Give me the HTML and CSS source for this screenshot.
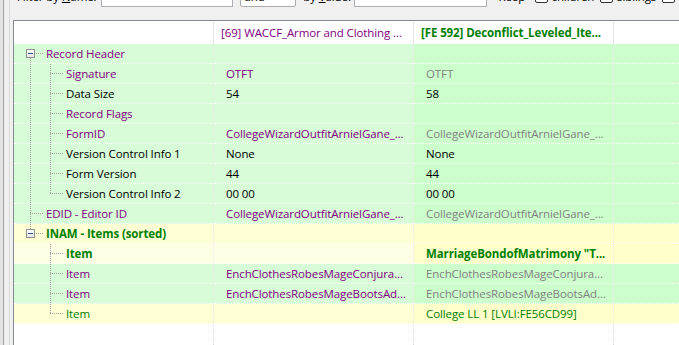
FILE: index.html
```html
<!DOCTYPE html>
<html lang="en">
<head>
  <meta charset="UTF-8">
  <title>Record View</title>
  <link rel="stylesheet" href="styles.css">
</head>
<body>
  <div class="app">
    <div class="side"><div class="split"></div></div>

    <div class="main">
      <div class="toolbar">
        <span class="lbl lbl-name">Filter by <u>N</u>ame:</span>
        <span class="field f-name"></span>
        <span class="field combo">and</span>
        <span class="lbl lbl-value">by <u>V</u>alue:</span>
        <span class="field f-value"></span>
        <span class="lbl lbl-keep">Keep</span>
        <span class="check"></span>
        <span class="lbl">children</span>
        <span class="check"></span>
        <span class="lbl">siblings</span>
        <span class="check"></span>
      </div>

      <div class="grid">
        <div class="hdr">
          <div></div>
          <div class="purple">[69] WACCF_Armor and Clothing ...</div>
          <div class="green bold">[FE 592] Deconflict_Leveled_Ite...</div>
          <div></div>
        </div>

        <!-- Record Header -->
        <div class="row g">
          <div class="name purple"><span class="ln v0 from-box"></span><span class="ln box"></span><span class="ln h0"></span>Record Header</div>
          <div></div><div></div><div></div>
        </div>
        <div class="row g">
          <div class="name l1 purple"><span class="ln v0"></span><span class="ln v1"></span><span class="ln h1"></span>Signature</div>
          <div class="purple">OTFT</div><div class="grey">OTFT</div><div></div>
        </div>
        <div class="row g">
          <div class="name l1"><span class="ln v0"></span><span class="ln v1"></span><span class="ln h1"></span>Data Size</div>
          <div>54</div><div>58</div><div></div>
        </div>
        <div class="row g">
          <div class="name l1 purple"><span class="ln v0"></span><span class="ln v1"></span><span class="ln h1"></span>Record Flags</div>
          <div></div><div></div><div></div>
        </div>
        <div class="row g">
          <div class="name l1 purple"><span class="ln v0"></span><span class="ln v1"></span><span class="ln h1"></span>FormID</div>
          <div class="purple">CollegeWizardOutfitArnielGane_...</div><div class="grey">CollegeWizardOutfitArnielGane_...</div><div></div>
        </div>
        <div class="row g">
          <div class="name l1"><span class="ln v0"></span><span class="ln v1"></span><span class="ln h1"></span>Version Control Info 1</div>
          <div>None</div><div>None</div><div></div>
        </div>
        <div class="row g">
          <div class="name l1"><span class="ln v0"></span><span class="ln v1"></span><span class="ln h1"></span>Form Version</div>
          <div>44</div><div>44</div><div></div>
        </div>
        <div class="row g">
          <div class="name l1"><span class="ln v0"></span><span class="ln v1 end"></span><span class="ln h1"></span>Version Control Info 2</div>
          <div>00 00</div><div>00 00</div><div></div>
        </div>

        <!-- EDID -->
        <div class="row g">
          <div class="name purple"><span class="ln v0"></span><span class="ln h0 nobox"></span>EDID - Editor ID</div>
          <div class="purple">CollegeWizardOutfitArnielGane_...</div><div class="grey">CollegeWizardOutfitArnielGane_...</div><div></div>
        </div>

        <!-- INAM -->
        <div class="row y">
          <div class="name green bold"><span class="ln v0 to-box"></span><span class="ln box"></span><span class="ln h0"></span>INAM - Items (sorted)</div>
          <div></div><div></div><div></div>
        </div>
        <div class="row y pale">
          <div class="name l1 green bold"><span class="ln v1"></span><span class="ln h1"></span>Item</div>
          <div></div><div class="green bold">MarriageBondofMatrimony "T...</div><div></div>
        </div>
        <div class="row g">
          <div class="name l1 purple"><span class="ln v1"></span><span class="ln h1"></span>Item</div>
          <div class="purple">EnchClothesRobesMageConjura...</div><div class="grey">EnchClothesRobesMageConjura...</div><div></div>
        </div>
        <div class="row g">
          <div class="name l1 purple"><span class="ln v1"></span><span class="ln h1"></span>Item</div>
          <div class="purple">EnchClothesRobesMageBootsAd...</div><div class="grey">EnchClothesRobesMageBootsAd...</div><div></div>
        </div>
        <div class="row y">
          <div class="name l1 green"><span class="ln v1 end"></span><span class="ln h1"></span>Item</div>
          <div></div><div class="green">College LL 1 [LVLI:FE56CD99]</div><div></div>
        </div>

        <div class="row fill">
          <div></div><div></div><div></div><div></div>
        </div>
      </div>
    </div>
  </div>
</body>
</html>
```

FILE: styles.css
```css
html, body {
  margin: 0;
  height: 345px;
  overflow: hidden;
}
body {
  font-family: "Open Sans", "Noto Sans", sans-serif;
  font-size: 11.5px;
  letter-spacing: -0.1px;
  background: #f0f0f0;
  color: #000;
}
.app {
  display: flex;
  height: 345px;
}

/* left splitter strip */
.side {
  width: 13px;
  flex: none;
  box-sizing: border-box;
  padding-left: 3px;
  background: linear-gradient(to right, #e4e4e4 0 3px, #f0f0f0 3px);
}
.split {
  width: 5px;
  height: 100%;
  border-left: 1px solid #a0a0a0;
  border-right: 1px solid #d9d9d9;
}

.main {
  flex: 1;
  display: flex;
  flex-direction: column;
  min-width: 0;
}

/* filter bar, mostly scrolled off the top */
.toolbar {
  height: 20px;
  flex: none;
  display: flex;
  align-items: flex-start;
  padding-left: 4px;
  white-space: nowrap;
}
.lbl {
  margin-top: -11px;
  line-height: 15px;
}
.lbl-name { width: 86px; }
.lbl-value { width: 52px; margin-left: 7px; }
.lbl-keep { margin-left: 12px; width: 31px; }
.field {
  margin-top: -13px;
  height: 20px;
  box-sizing: border-box;
  border: 1px solid #abadb3;
  background: #fff;
}
.f-name { width: 135px; }
.f-value { width: 136px; }
.combo {
  width: 58px;
  margin-left: 7px;
  border-color: #acacac;
  border-radius: 2px;
  padding: 1px 0 0 4px;
  line-height: 15px;
}
.check {
  margin-top: -10px;
  width: 13px;
  height: 13px;
  box-sizing: border-box;
  border: 1px solid #333;
  border-radius: 2px;
  background: #fff;
  margin-left: 0;
  margin-right: 4px;
}
.lbl + .check { margin-left: 6px; }

/* record grid */
.grid {
  flex: 1;
  border-top: 1px solid #828790;
  border-left: 1px solid #828790;
  background: #fff;
}
.hdr, .row {
  display: grid;
  grid-template-columns: 200px 200px 200px 1fr;
}
.hdr {
  height: 23px;
}
.hdr > div {
  border-right: 1px solid #e5e5e5;
  line-height: 23px;
  padding-left: 7px;
  white-space: nowrap;
  overflow: hidden;
}
.row {
  height: 20px;
}
.row > div {
  border-right: 1px dotted #e9e9e9;
  border-bottom: 1px dotted #fff;
  line-height: 19px;
  padding-left: 12px;
  white-space: nowrap;
  overflow: hidden;
}
.row > div:last-child,
.hdr > div:last-child {
  border-right: none;
}

.row.g > div:nth-child(-n+2) { background: #d7fcd7; }
.row.g > div:nth-child(n+3) { background: #ccffcc; }
.row.y > div:nth-child(-n+2) { background: #ffffd6; }
.row.y > div:nth-child(n+3) { background: #ffffcc; }
.row.y.pale > div:nth-child(-n+2) { background: #ffffe6; }

.row.fill {
  height: 21px;
}
.row.fill > div {
  border-bottom: none;
  border-right-color: #d6d6d6;
}

.purple { color: #800080; }
.green { color: #008000; }
.grey { color: #808080; }
.bold { font-weight: bold; }

/* tree column and its connector lines */
.row > .name {
  position: relative;
  padding-left: 32px;
  overflow: visible;
}
.row > .name.l1 {
  padding-left: 52px;
}
.ln {
  position: absolute;
}
.v0, .v1 {
  top: 0;
  bottom: -1px;
  width: 1px;
  background: repeating-linear-gradient(to bottom, #a0a0a0 0 1px, transparent 1px 2px);
}
.v0 { left: 16px; }
.v1 { left: 36px; }
.v0.from-box { top: 14px; }
.v0.to-box { bottom: auto; height: 5px; }
.v1.end { bottom: auto; height: 10px; }
.h0, .h1 {
  top: 9px;
  height: 1px;
  background: repeating-linear-gradient(to right, #a0a0a0 0 1px, transparent 1px 2px);
}
.h0 { left: 22px; width: 8px; }
.h0.nobox { left: 16px; width: 14px; }
.h1 { left: 36px; width: 13px; }
.box {
  left: 12px;
  top: 5px;
  width: 9px;
  height: 9px;
  box-sizing: border-box;
  border: 1px solid #919191;
  background: linear-gradient(#fff, #e6e6e6);
}
.box::after {
  content: "";
  position: absolute;
  left: 1px;
  top: 3px;
  width: 5px;
  height: 1px;
  background: #2d4f8a;
}
```
